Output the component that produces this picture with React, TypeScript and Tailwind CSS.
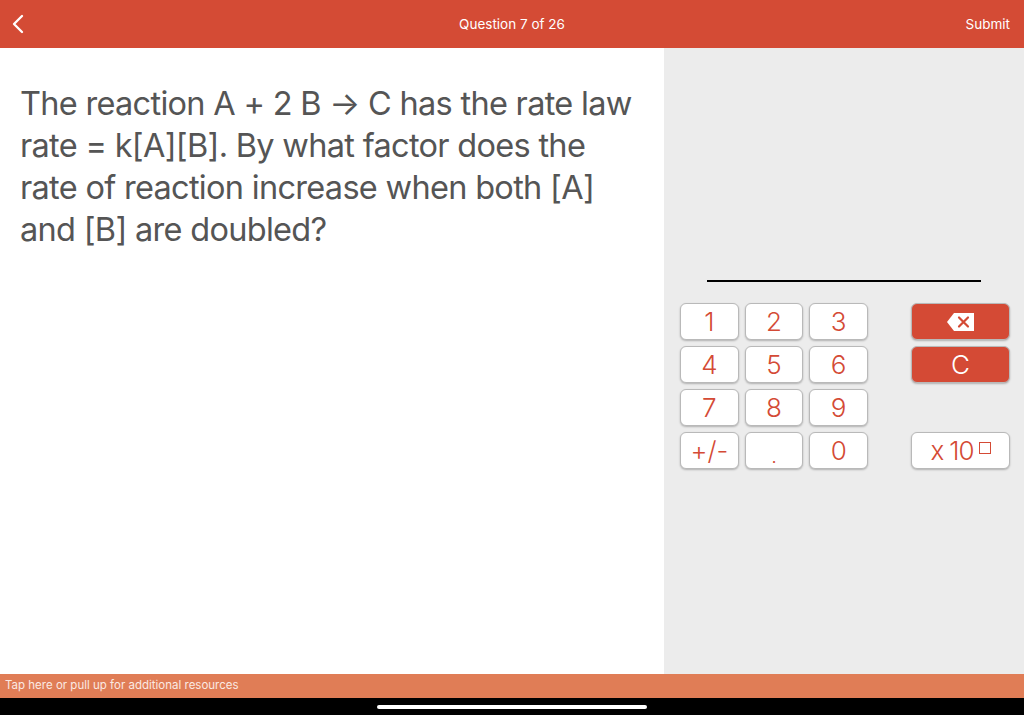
import { ChevronLeft } from "lucide-react";

const keys = ["1", "2", "3", "4", "5", "6", "7", "8", "9", "+/-", ".", "0"];

function Key({ label }: { label: string }) {
  return (
    <button className="flex h-[37px] items-center justify-center rounded-[6px] border border-[#b9b9b9] bg-white text-[26px] font-light leading-none text-[#d44a35] shadow-[0_1px_2px_rgba(0,0,0,0.25)]">
      {label === "." ? <span className="mt-[10px] text-[20px]">.</span> : label}
    </button>
  );
}

export default function App() {
  return (
    <div className="flex h-[715px] w-[1024px] flex-col overflow-hidden bg-black font-['Inter','Liberation_Sans',sans-serif]">
      <header className="grid h-[48px] shrink-0 grid-cols-3 items-center bg-[#d44b35] text-white">
        <div className="pl-[2px]">
          <ChevronLeft className="h-8 w-8" strokeWidth={1.75} />
        </div>
        <div className="text-center text-[13.5px]">Question 7 of 26</div>
        <div className="pr-[14px] text-right text-[13.5px]">Submit</div>
      </header>

      <div className="flex min-h-0 flex-1">
        <div className="w-[664px] bg-white px-5 pt-[35px]">
          <p className="text-[32.5px] leading-[42px] tracking-[-0.7px] text-[#555555]">
            The reaction A + 2 B → C has the rate law rate = k[A][B]. By what factor does the rate of reaction increase when both [A] and [B] are doubled?
          </p>
        </div>

        <div className="flex flex-1 flex-col bg-[#ececec] pt-[232px]">
          <div className="ml-[43px] mr-[43px] h-[2px] bg-black" />
          <div className="mt-[21px] flex gap-[43px] pl-[16px] pr-[14px]">
            <div className="grid w-[188px] grid-cols-3 gap-x-[6px] gap-y-[6px]">
              {keys.map((k) => (
                <Key key={k} label={k} />
              ))}
            </div>
            <div className="grid w-[99px] grid-rows-4 gap-y-[6px]">
              <button className="flex h-[37px] items-center justify-center rounded-[6px] border border-[#b9b9b9] bg-[#d44a35] shadow-[0_1px_2px_rgba(0,0,0,0.25)]">
                <svg width="30" height="20" viewBox="0 0 30 20">
                  <path d="M8 1 H28 V19 H8 L1 10 Z" fill="white" />
                  <path d="M13 5.5 L22 14.5 M22 5.5 L13 14.5" stroke="#d44a35" strokeWidth="2.2" strokeLinecap="round" />
                </svg>
              </button>
              <button className="flex h-[37px] items-center justify-center rounded-[6px] border border-[#b9b9b9] bg-[#d44a35] text-[26px] font-light text-white shadow-[0_1px_2px_rgba(0,0,0,0.25)]">
                C
              </button>
              <div className="h-[37px]" />
              <button className="flex h-[37px] items-center justify-center gap-[5px] rounded-[6px] border border-[#b9b9b9] bg-white text-[26px] font-light leading-none text-[#d44a35] shadow-[0_1px_2px_rgba(0,0,0,0.25)]">
                <span className="text-[26px]">x</span>
                <span className="text-[26px] tracking-[-1px]">10</span>
                <span className="mb-[6px] h-[12px] w-[12px] border border-[#d44a35]" />
              </button>
            </div>
          </div>
        </div>
      </div>

      <div className="flex h-[24px] shrink-0 items-center bg-[#e07d56] px-[5px] text-[11.5px] text-[#fbe9e2]">
        Tap here or pull up for additional resources
      </div>
      <div className="flex h-[17px] shrink-0 items-center justify-center bg-black">
        <div className="mt-[1px] h-[4px] w-[270px] rounded-full bg-white" />
      </div>
    </div>
  );
}
